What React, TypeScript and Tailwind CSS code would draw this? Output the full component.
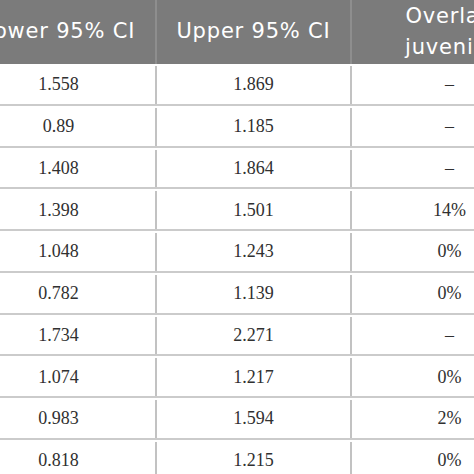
const rows: [string, string, string][] = [
  ["1.558", "1.869", "–"],
  ["0.89", "1.185", "–"],
  ["1.408", "1.864", "–"],
  ["1.398", "1.501", "14%"],
  ["1.048", "1.243", "0%"],
  ["0.782", "1.139", "0%"],
  ["1.734", "2.271", "–"],
  ["1.074", "1.217", "0%"],
  ["0.983", "1.594", "2%"],
  ["0.818", "1.215", "0%"],
];

export default function App() {
  return (
    <div className="h-[474px] w-[474px] overflow-hidden bg-white">
      <div className="ml-[-38px] w-[585px]">
        <div className="grid h-[64px] grid-cols-[195px_195px_195px] bg-[#7b7b7b] font-['DejaVu_Sans',sans-serif] text-[21px] tracking-[0.8px] text-white">
          <div className="flex items-center justify-center border-r-2 border-[#8e8e8e] leading-[31.5px]">
            Lower 95% CI
          </div>
          <div className="flex items-center justify-center border-r-2 border-[#8e8e8e] leading-[31.5px]">
            Upper 95% CI
          </div>
          <div className="flex flex-col items-center justify-center leading-[31.5px]">
            <span>Overlap</span>
            <span>juvenile</span>
          </div>
        </div>
        {rows.map((r, i) => (
          <div
            key={i}
            className="grid h-[41.75px] grid-cols-[195px_195px_195px] border-b-2 border-[#cbcbcb] pt-[2px] font-['Liberation_Serif',serif] text-[18px] text-[#303030]"
          >
            <div className="flex items-center justify-center border-r-2 border-[#c2c2c2]">{r[0]}</div>
            <div className="flex items-center justify-center border-r-2 border-[#c2c2c2]">{r[1]}</div>
            <div className="flex items-center justify-center">{r[2]}</div>
          </div>
        ))}
      </div>
    </div>
  );
}
